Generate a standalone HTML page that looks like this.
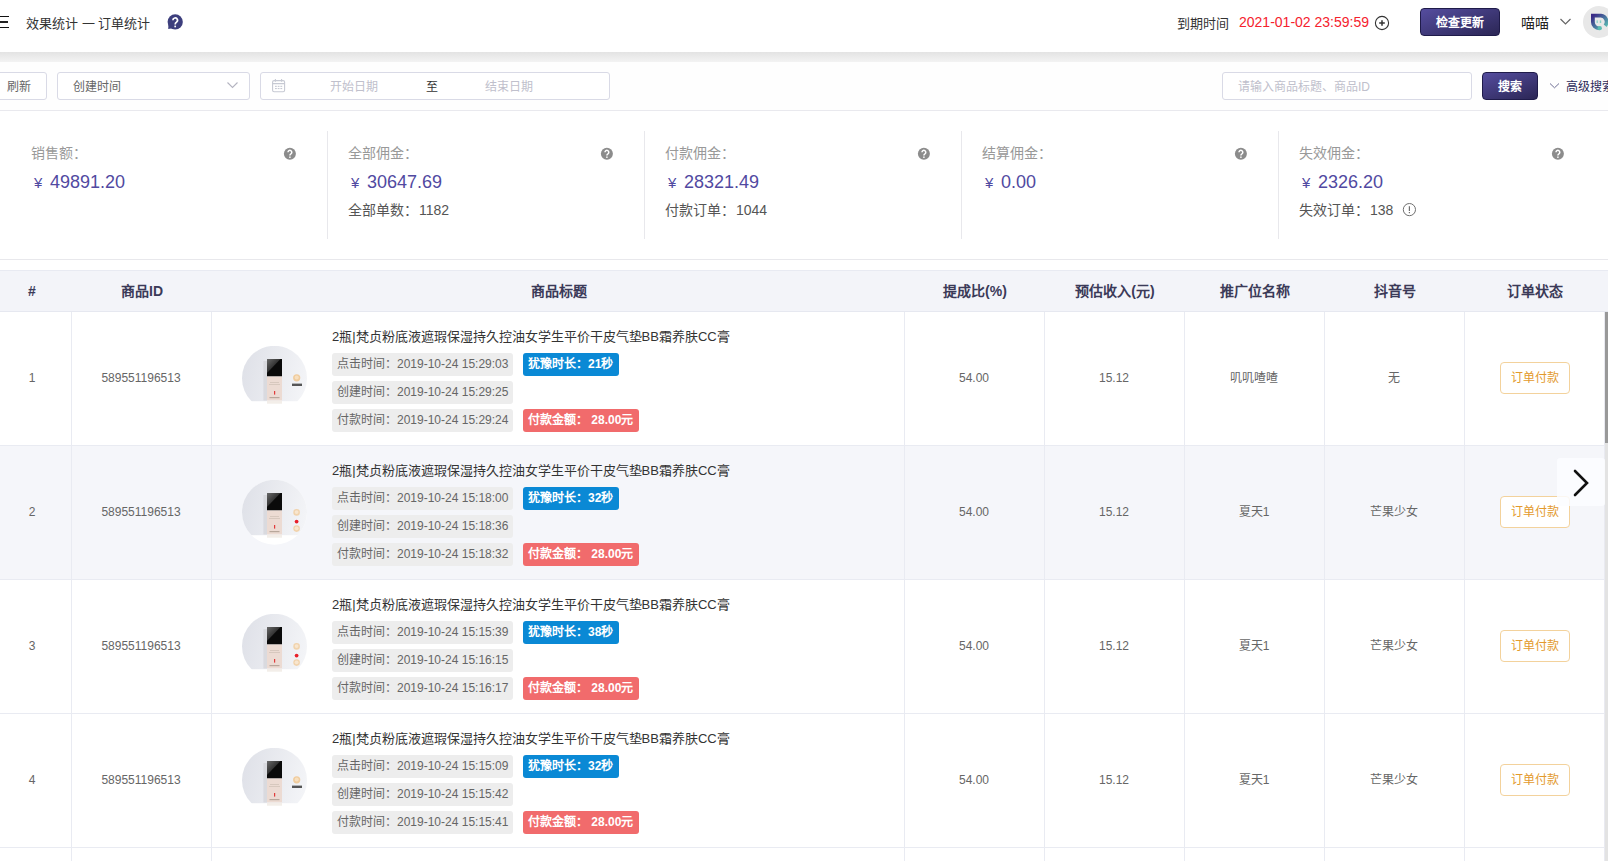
<!DOCTYPE html>
<html lang="zh-CN">
<head>
<meta charset="utf-8">
<style>
*{box-sizing:border-box;margin:0;padding:0}
html,body{width:1608px;height:861px;overflow:hidden;background:#fff}
body{position:relative;font-family:"Liberation Sans",sans-serif;font-size:13px;color:#333}
.a{position:absolute;white-space:nowrap}
.t13{font-size:13px;line-height:16px}
.t12{font-size:12px;line-height:15px}
/* header */
#hdr{position:absolute;left:0;top:0;width:1608px;height:52px;background:#fff}
#band{position:absolute;left:0;top:52px;width:1608px;height:10px;background:linear-gradient(#e3e3e3,#f3f3f3)}
#filter{position:absolute;left:0;top:62px;width:1608px;height:49px;background:#fefefe;border-bottom:1px solid #e9e9ee}
.box{position:absolute;border:1px solid #d9dae6;border-radius:3px;background:#fff}
.btnp{position:absolute;border-radius:4px;border:1px solid #1f1b4a;background:linear-gradient(160deg,#554d9f,#2b2655);color:#fff;font-weight:bold;text-align:center}
#stats{position:absolute;left:0;top:111px;width:1608px;height:149px;background:#fff;border-bottom:1px solid #e8e8ec}
.sep{position:absolute;top:131px;width:1px;height:108px;background:#e8e8ec}
.slab{color:#999;font-size:14px;line-height:17px}
.sval{color:#5149a1;font-size:18px;line-height:20px}
.ssub{color:#555;font-size:14px;line-height:17px}
.qi{position:absolute;width:12px;height:12px;border-radius:50%;background:#8a8a8a;color:#fff;font-size:10px;line-height:12px;text-align:center;font-weight:bold}
/* table */
#thead{position:absolute;left:0;top:270px;width:1608px;height:42px;background:#f3f4f9;border-top:1px solid #e8eaf2;border-bottom:1px solid #e6e8f0}
.th{position:absolute;top:283px;font-size:14px;line-height:17px;font-weight:bold;color:#3b3a58;text-align:center}
.row{position:absolute;left:0;width:1604px;height:134px;border-bottom:1px solid #e9ebf2}
.vl{position:absolute;width:1px;background:#e9ebf2}
.cell{position:absolute;font-size:12px;line-height:15px;color:#666;text-align:center}
.tag{position:absolute;white-space:nowrap;height:23px;border-radius:3px;font-size:12px;line-height:23px;padding:0 5px}
.tg{background:#ededed;color:#666}
.tb{background:#0a89d5;color:#fff;font-weight:bold}
.tr{background:#f16b6c;color:#fff;font-weight:bold}
.obtn{position:absolute;width:70px;height:32px;border:1px solid #f3d29c;border-radius:4px;color:#e39a2c;font-size:12px;line-height:31px;text-align:center;background:#fff}
</style>
</head>
<body>
<div id="hdr"></div><div id="band"></div><div id="filter"></div><div id="stats"></div>
<div class="a" style="left:0;top:15.6px;width:8.6px;height:1.6px;background:#111"></div>
<div class="a" style="left:0;top:21.2px;width:8.2px;height:1.6px;background:#222"></div>
<div class="a" style="left:0;top:26.6px;width:8.6px;height:1.6px;background:#111"></div>
<div class="a t13" style="left:26px;top:16px;color:#333">效果统计 一 订单统计</div>
<svg class="a" style="left:166px;top:13px" width="18" height="18" viewBox="0 0 18 18"><circle cx="9.2" cy="8.9" r="7.6" fill="#3d3f7d"/><path d="M2.5 11.5 L2.2 16 L6.8 15.2 Z" fill="#3d3f7d"/><path d="M6.9 7.3 A2.3 2.3 0 1 1 10.4 9.2 C9.5 9.7 9.2 10.2 9.2 11.4" fill="none" stroke="#fff" stroke-width="1.7"/><rect x="8.35" y="12.6" width="1.7" height="1.7" fill="#fff"/></svg>
<div class="a t13" style="left:1177px;top:16px;color:#333">到期时间</div>
<div class="a" style="left:1239px;top:14px;font-size:14px;line-height:17px;color:#f5222d">2021-01-02 23:59:59</div>
<svg class="a" style="left:1374px;top:15px" width="16" height="16" viewBox="0 0 16 16"><circle cx="8" cy="8" r="6.6" fill="none" stroke="#333" stroke-width="1.1"/><path d="M5.2 8 H10.8 M8 5.2 V10.8" stroke="#333" stroke-width="1.5"/></svg>
<div class="btnp" style="left:1420px;top:8px;width:80px;height:28px;line-height:28px;font-size:12px">检查更新</div>
<div class="a" style="left:1521px;top:15px;color:#222;font-size:14px;line-height:17px">喵喵</div>
<svg class="a" style="left:1559px;top:17px" width="13" height="9" viewBox="0 0 13 9"><path d="M1.5 2 L6.5 7 L11.5 2" fill="none" stroke="#666" stroke-width="1.2"/></svg>
<div class="a" style="left:1583px;top:6px;width:32px;height:32px;border-radius:50%;background:#e8e8e8"></div>
<svg class="a" style="left:1590px;top:13px" width="18" height="18" viewBox="0 0 18 18"><defs><linearGradient id="lg" x1="0" y1="0" x2="1" y2="1"><stop offset="0" stop-color="#3a2a86"/><stop offset="0.55" stop-color="#4a7aa0"/><stop offset="1" stop-color="#60c8b6"/></linearGradient></defs>
<path d="M15.2 12.8 A6.2 6.2 0 0 0 11 2.7 H2.9 V9 A6.4 6.4 0 0 0 9.3 15.4" fill="none" stroke="url(#lg)" stroke-width="3.8"/>
<circle cx="9.8" cy="15.2" r="2.1" fill="#5bbdb2"/>
<rect x="6.6" y="7.4" width="1.2" height="2.6" fill="#86d3c6"/><rect x="9.8" y="7.4" width="1.4" height="2.6" fill="#86d3c6"/></svg>
<div class="box" style="left:-10px;top:72px;width:57px;height:28px"></div>
<div class="a t12" style="left:7px;top:80px;color:#666">刷新</div>
<div class="box" style="left:57px;top:72px;width:193px;height:28px"></div>
<div class="a t12" style="left:73px;top:80px;color:#666">创建时间</div>
<svg class="a" style="left:226px;top:80px" width="13" height="10" viewBox="0 0 13 10"><path d="M1.5 2.5 L6.5 7.5 L11.5 2.5" fill="none" stroke="#b4b4c0" stroke-width="1.1"/></svg>
<div class="box" style="left:260px;top:72px;width:350px;height:28px"></div>
<svg class="a" style="left:271px;top:78px" width="15" height="15" viewBox="0 0 15 15"><g fill="none" stroke="#c6c9d3" stroke-width="1.1"><rect x="1.6" y="2.6" width="12" height="11.2" rx="1.5"/><path d="M1.6 5.6 H13.6 M4.4 0.9 V3.8 M10.6 0.9 V3.8"/></g>
<g fill="#c6c9d3"><rect x="4" y="7.8" width="1.8" height="1.1"/><rect x="6.7" y="7.8" width="1.8" height="1.1"/><rect x="9.4" y="7.8" width="1.8" height="1.1"/><rect x="4" y="10" width="1.8" height="1.1"/><rect x="6.7" y="10" width="1.8" height="1.1"/><rect x="9.4" y="10" width="1.8" height="1.1"/></g></svg>
<div class="a t12" style="left:330px;top:80px;color:#c0c0cc">开始日期</div>
<div class="a t12" style="left:426px;top:80px;color:#333">至</div>
<div class="a t12" style="left:485px;top:80px;color:#c0c0cc">结束日期</div>
<div class="box" style="left:1222px;top:72px;width:250px;height:28px"></div>
<div class="a t12" style="left:1238px;top:80px;color:#c0c0cc">请输入商品标题、商品ID</div>
<div class="btnp" style="left:1482px;top:72px;width:56px;height:28px;line-height:28px;font-size:12px">搜索</div>
<svg class="a" style="left:1549px;top:82px" width="11" height="8" viewBox="0 0 11 8"><path d="M1 1.5 L5.5 5.8 L10 1.5" fill="none" stroke="#6f6f95" stroke-width="1"/></svg>
<div class="a t12" style="left:1566px;top:80px;color:#2d2b5b">高级搜索</div>
<div class="a slab" style="left:31px;top:145px">销售额：</div>
<svg class="a" style="left:283px;top:147px" width="14" height="14" viewBox="0 0 14 14"><circle cx="6.9" cy="6.75" r="6" fill="#8c8c8c"/><path d="M5.0 5.3 A1.9 1.9 0 1 1 7.9 6.9 C7.1 7.3 6.9 7.7 6.9 8.6" fill="none" stroke="#fff" stroke-width="1.5"/><rect x="6.15" y="9.5" width="1.5" height="1.4" fill="#fff"/></svg>
<div class="a sval" style="left:34px;top:173px;font-size:15px">¥</div>
<div class="a sval" style="left:50px;top:172px">49891.20</div>
<div class="sep" style="left:327px"></div>
<div class="a slab" style="left:348px;top:145px">全部佣金：</div>
<svg class="a" style="left:600px;top:147px" width="14" height="14" viewBox="0 0 14 14"><circle cx="6.9" cy="6.75" r="6" fill="#8c8c8c"/><path d="M5.0 5.3 A1.9 1.9 0 1 1 7.9 6.9 C7.1 7.3 6.9 7.7 6.9 8.6" fill="none" stroke="#fff" stroke-width="1.5"/><rect x="6.15" y="9.5" width="1.5" height="1.4" fill="#fff"/></svg>
<div class="a sval" style="left:351px;top:173px;font-size:15px">¥</div>
<div class="a sval" style="left:367px;top:172px">30647.69</div>
<div class="a ssub" style="left:348px;top:202px">全部单数：<span style="margin-left:1px">1182</span></div>
<div class="sep" style="left:644px"></div>
<div class="a slab" style="left:665px;top:145px">付款佣金：</div>
<svg class="a" style="left:917px;top:147px" width="14" height="14" viewBox="0 0 14 14"><circle cx="6.9" cy="6.75" r="6" fill="#8c8c8c"/><path d="M5.0 5.3 A1.9 1.9 0 1 1 7.9 6.9 C7.1 7.3 6.9 7.7 6.9 8.6" fill="none" stroke="#fff" stroke-width="1.5"/><rect x="6.15" y="9.5" width="1.5" height="1.4" fill="#fff"/></svg>
<div class="a sval" style="left:668px;top:173px;font-size:15px">¥</div>
<div class="a sval" style="left:684px;top:172px">28321.49</div>
<div class="a ssub" style="left:665px;top:202px">付款订单：<span style="margin-left:1px">1044</span></div>
<div class="sep" style="left:961px"></div>
<div class="a slab" style="left:982px;top:145px">结算佣金：</div>
<svg class="a" style="left:1234px;top:147px" width="14" height="14" viewBox="0 0 14 14"><circle cx="6.9" cy="6.75" r="6" fill="#8c8c8c"/><path d="M5.0 5.3 A1.9 1.9 0 1 1 7.9 6.9 C7.1 7.3 6.9 7.7 6.9 8.6" fill="none" stroke="#fff" stroke-width="1.5"/><rect x="6.15" y="9.5" width="1.5" height="1.4" fill="#fff"/></svg>
<div class="a sval" style="left:985px;top:173px;font-size:15px">¥</div>
<div class="a sval" style="left:1001px;top:172px">0.00</div>
<div class="sep" style="left:1278px"></div>
<div class="a slab" style="left:1299px;top:145px">失效佣金：</div>
<svg class="a" style="left:1551px;top:147px" width="14" height="14" viewBox="0 0 14 14"><circle cx="6.9" cy="6.75" r="6" fill="#8c8c8c"/><path d="M5.0 5.3 A1.9 1.9 0 1 1 7.9 6.9 C7.1 7.3 6.9 7.7 6.9 8.6" fill="none" stroke="#fff" stroke-width="1.5"/><rect x="6.15" y="9.5" width="1.5" height="1.4" fill="#fff"/></svg>
<div class="a sval" style="left:1302px;top:173px;font-size:15px">¥</div>
<div class="a sval" style="left:1318px;top:172px">2326.20</div>
<div class="a ssub" style="left:1299px;top:202px">失效订单：<span style="margin-left:1px">138</span></div>
<svg class="a" style="left:1402px;top:202px" width="15" height="15" viewBox="0 0 15 15"><circle cx="7.4" cy="7.6" r="6.1" fill="none" stroke="#707070" stroke-width="1"/><path d="M7.4 4.3 V8.9" stroke="#707070" stroke-width="1.2"/><rect x="6.8" y="10" width="1.2" height="1.2" fill="#707070"/></svg>
<div id="thead"></div>
<div class="th" style="left:-7px;width:78px">#</div>
<div class="th" style="left:72px;width:140px">商品ID</div>
<div class="th" style="left:212px;width:693px">商品标题</div>
<div class="th" style="left:905px;width:140px">提成比(%)</div>
<div class="th" style="left:1045px;width:140px">预估收入(元)</div>
<div class="th" style="left:1185px;width:140px">推广位名称</div>
<div class="th" style="left:1325px;width:140px">抖音号</div>
<div class="th" style="left:1465px;width:140px">订单状态</div>
<div class="row" style="top:312px;background:#fff"></div>
<div class="vl" style="left:71px;top:312px;height:134px"></div>
<div class="vl" style="left:211px;top:312px;height:134px"></div>
<div class="vl" style="left:904px;top:312px;height:134px"></div>
<div class="vl" style="left:1044px;top:312px;height:134px"></div>
<div class="vl" style="left:1184px;top:312px;height:134px"></div>
<div class="vl" style="left:1324px;top:312px;height:134px"></div>
<div class="vl" style="left:1464px;top:312px;height:134px"></div>
<div class="cell" style="left:-7px;width:78px;top:371px">1</div>
<div class="cell" style="left:71px;width:140px;top:371px">589551196513</div>
<svg class="a" style="left:242px;top:346px" width="66" height="66" viewBox="0 0 66 66">
<defs><linearGradient id="cg346" x1="0" y1="0.3" x2="1" y2="0.5"><stop offset="0" stop-color="#dfe1e8"/><stop offset="1" stop-color="#f3f4f7"/></linearGradient>
<linearGradient id="cap346" x1="0" y1="0" x2="0.7" y2="0.7"><stop offset="0" stop-color="#6a6a6a"/><stop offset="1" stop-color="#1c1c1c"/></linearGradient>
<clipPath id="cp346"><circle cx="32.5" cy="32.3" r="32.5"/></clipPath></defs>
<g clip-path="url(#cp346)">
<rect x="0" y="0" width="66" height="66" fill="#fff"/>
<rect x="0" y="0" width="66" height="55.2" fill="url(#cg346)"/>
<path d="M11 6.5 L14 4.5" stroke="#444" stroke-width="1" opacity="0.7"/>
<rect x="21.4" y="15" width="3.6" height="39.5" fill="#d9dadf"/>
<rect x="25" y="13" width="15" height="17.5" fill="#0a0a0a"/><path d="M25 13 H38.5 L25 27 Z" fill="url(#cap346)"/>
<rect x="25" y="30.5" width="15" height="24" fill="#ecdbd3"/>
<rect x="25" y="54.5" width="15" height="3.2" fill="#f3eee9"/>
<rect x="28" y="36" width="9" height="0.8" fill="#d3c3b9"/>
<rect x="27" y="38" width="11" height="0.8" fill="#d3c3b9"/>
<rect x="32" y="45" width="1.2" height="3.6" fill="#e23a3a"/>
<rect x="27.5" y="51" width="10" height="1.2" fill="#b8a79b"/>
<circle cx="54.7" cy="31.8" r="3.6" fill="#f0cc9e"/><circle cx="54.7" cy="31.5" r="2" fill="#f7dfbf"/><rect x="50" y="37.6" width="10" height="2.4" fill="#3a3a3a" opacity="0.85"/></g>
</svg>
<div class="a t13" style="left:332px;top:329px;color:#333">2瓶|梵贞粉底液遮瑕保湿持久控油女学生平价干皮气垫BB霜养肤CC膏</div>
<div class="tag tg" style="left:332px;top:353px;width:181px">点击时间：2019-10-24 15:29:03</div>
<div class="tag tb" style="left:523px;top:353px;width:96px">犹豫时长：21秒</div>
<div class="tag tg" style="left:332px;top:381px;width:181px">创建时间：2019-10-24 15:29:25</div>
<div class="tag tg" style="left:332px;top:409px;width:181px">付款时间：2019-10-24 15:29:24</div>
<div class="tag tr" style="left:523px;top:409px;width:116px">付款金额： 28.00元</div>
<div class="cell" style="left:904px;width:140px;top:371px">54.00</div>
<div class="cell" style="left:1044px;width:140px;top:371px">15.12</div>
<div class="cell" style="left:1184px;width:140px;top:371px">叽叽喳喳</div>
<div class="cell" style="left:1324px;width:140px;top:371px">无</div>
<div class="obtn" style="left:1500px;top:362px">订单付款</div>
<div class="row" style="top:446px;background:#f5f6fa"></div>
<div class="vl" style="left:71px;top:446px;height:134px"></div>
<div class="vl" style="left:211px;top:446px;height:134px"></div>
<div class="vl" style="left:904px;top:446px;height:134px"></div>
<div class="vl" style="left:1044px;top:446px;height:134px"></div>
<div class="vl" style="left:1184px;top:446px;height:134px"></div>
<div class="vl" style="left:1324px;top:446px;height:134px"></div>
<div class="vl" style="left:1464px;top:446px;height:134px"></div>
<div class="cell" style="left:-7px;width:78px;top:505px">2</div>
<div class="cell" style="left:71px;width:140px;top:505px">589551196513</div>
<svg class="a" style="left:242px;top:480px" width="66" height="66" viewBox="0 0 66 66">
<defs><linearGradient id="cg480" x1="0" y1="0.3" x2="1" y2="0.5"><stop offset="0" stop-color="#dfe1e8"/><stop offset="1" stop-color="#f3f4f7"/></linearGradient>
<linearGradient id="cap480" x1="0" y1="0" x2="0.7" y2="0.7"><stop offset="0" stop-color="#6a6a6a"/><stop offset="1" stop-color="#1c1c1c"/></linearGradient>
<clipPath id="cp480"><circle cx="32.5" cy="32.3" r="32.5"/></clipPath></defs>
<g clip-path="url(#cp480)">
<rect x="0" y="0" width="66" height="66" fill="#fff"/>
<rect x="0" y="0" width="66" height="55.2" fill="url(#cg480)"/>
<path d="M11 6.5 L14 4.5" stroke="#444" stroke-width="1" opacity="0.7"/>
<rect x="21.4" y="15" width="3.6" height="39.5" fill="#d9dadf"/>
<rect x="25" y="13" width="15" height="17.5" fill="#0a0a0a"/><path d="M25 13 H38.5 L25 27 Z" fill="url(#cap480)"/>
<rect x="25" y="30.5" width="15" height="24" fill="#ecdbd3"/>
<rect x="25" y="54.5" width="15" height="3.2" fill="#f3eee9"/>
<rect x="28" y="36" width="9" height="0.8" fill="#d3c3b9"/>
<rect x="27" y="38" width="11" height="0.8" fill="#d3c3b9"/>
<rect x="32" y="45" width="1.2" height="3.6" fill="#e23a3a"/>
<rect x="27.5" y="51" width="10" height="1.2" fill="#b8a79b"/>
<circle cx="54.6" cy="32.4" r="3.3" fill="#f1d3ad"/><circle cx="54.6" cy="32.1" r="1.9" fill="#f8e6cf"/><circle cx="54.6" cy="41.6" r="1.9" fill="#e8202a"/><circle cx="54.6" cy="48.6" r="3.3" fill="#f1d3ad"/><circle cx="54.6" cy="48.3" r="1.9" fill="#f8e6cf"/></g>
</svg>
<div class="a t13" style="left:332px;top:463px;color:#333">2瓶|梵贞粉底液遮瑕保湿持久控油女学生平价干皮气垫BB霜养肤CC膏</div>
<div class="tag tg" style="left:332px;top:487px;width:181px">点击时间：2019-10-24 15:18:00</div>
<div class="tag tb" style="left:523px;top:487px;width:96px">犹豫时长：32秒</div>
<div class="tag tg" style="left:332px;top:515px;width:181px">创建时间：2019-10-24 15:18:36</div>
<div class="tag tg" style="left:332px;top:543px;width:181px">付款时间：2019-10-24 15:18:32</div>
<div class="tag tr" style="left:523px;top:543px;width:116px">付款金额： 28.00元</div>
<div class="cell" style="left:904px;width:140px;top:505px">54.00</div>
<div class="cell" style="left:1044px;width:140px;top:505px">15.12</div>
<div class="cell" style="left:1184px;width:140px;top:505px">夏天1</div>
<div class="cell" style="left:1324px;width:140px;top:505px">芒果少女</div>
<div class="obtn" style="left:1500px;top:496px">订单付款</div>
<div class="row" style="top:580px;background:#fff"></div>
<div class="vl" style="left:71px;top:580px;height:134px"></div>
<div class="vl" style="left:211px;top:580px;height:134px"></div>
<div class="vl" style="left:904px;top:580px;height:134px"></div>
<div class="vl" style="left:1044px;top:580px;height:134px"></div>
<div class="vl" style="left:1184px;top:580px;height:134px"></div>
<div class="vl" style="left:1324px;top:580px;height:134px"></div>
<div class="vl" style="left:1464px;top:580px;height:134px"></div>
<div class="cell" style="left:-7px;width:78px;top:639px">3</div>
<div class="cell" style="left:71px;width:140px;top:639px">589551196513</div>
<svg class="a" style="left:242px;top:614px" width="66" height="66" viewBox="0 0 66 66">
<defs><linearGradient id="cg614" x1="0" y1="0.3" x2="1" y2="0.5"><stop offset="0" stop-color="#dfe1e8"/><stop offset="1" stop-color="#f3f4f7"/></linearGradient>
<linearGradient id="cap614" x1="0" y1="0" x2="0.7" y2="0.7"><stop offset="0" stop-color="#6a6a6a"/><stop offset="1" stop-color="#1c1c1c"/></linearGradient>
<clipPath id="cp614"><circle cx="32.5" cy="32.3" r="32.5"/></clipPath></defs>
<g clip-path="url(#cp614)">
<rect x="0" y="0" width="66" height="66" fill="#fff"/>
<rect x="0" y="0" width="66" height="55.2" fill="url(#cg614)"/>
<path d="M11 6.5 L14 4.5" stroke="#444" stroke-width="1" opacity="0.7"/>
<rect x="21.4" y="15" width="3.6" height="39.5" fill="#d9dadf"/>
<rect x="25" y="13" width="15" height="17.5" fill="#0a0a0a"/><path d="M25 13 H38.5 L25 27 Z" fill="url(#cap614)"/>
<rect x="25" y="30.5" width="15" height="24" fill="#ecdbd3"/>
<rect x="25" y="54.5" width="15" height="3.2" fill="#f3eee9"/>
<rect x="28" y="36" width="9" height="0.8" fill="#d3c3b9"/>
<rect x="27" y="38" width="11" height="0.8" fill="#d3c3b9"/>
<rect x="32" y="45" width="1.2" height="3.6" fill="#e23a3a"/>
<rect x="27.5" y="51" width="10" height="1.2" fill="#b8a79b"/>
<circle cx="54.6" cy="32.4" r="3.3" fill="#f1d3ad"/><circle cx="54.6" cy="32.1" r="1.9" fill="#f8e6cf"/><circle cx="54.6" cy="41.6" r="1.9" fill="#e8202a"/><circle cx="54.6" cy="48.6" r="3.3" fill="#f1d3ad"/><circle cx="54.6" cy="48.3" r="1.9" fill="#f8e6cf"/></g>
</svg>
<div class="a t13" style="left:332px;top:597px;color:#333">2瓶|梵贞粉底液遮瑕保湿持久控油女学生平价干皮气垫BB霜养肤CC膏</div>
<div class="tag tg" style="left:332px;top:621px;width:181px">点击时间：2019-10-24 15:15:39</div>
<div class="tag tb" style="left:523px;top:621px;width:96px">犹豫时长：38秒</div>
<div class="tag tg" style="left:332px;top:649px;width:181px">创建时间：2019-10-24 15:16:15</div>
<div class="tag tg" style="left:332px;top:677px;width:181px">付款时间：2019-10-24 15:16:17</div>
<div class="tag tr" style="left:523px;top:677px;width:116px">付款金额： 28.00元</div>
<div class="cell" style="left:904px;width:140px;top:639px">54.00</div>
<div class="cell" style="left:1044px;width:140px;top:639px">15.12</div>
<div class="cell" style="left:1184px;width:140px;top:639px">夏天1</div>
<div class="cell" style="left:1324px;width:140px;top:639px">芒果少女</div>
<div class="obtn" style="left:1500px;top:630px">订单付款</div>
<div class="row" style="top:714px;background:#fff"></div>
<div class="vl" style="left:71px;top:714px;height:134px"></div>
<div class="vl" style="left:211px;top:714px;height:134px"></div>
<div class="vl" style="left:904px;top:714px;height:134px"></div>
<div class="vl" style="left:1044px;top:714px;height:134px"></div>
<div class="vl" style="left:1184px;top:714px;height:134px"></div>
<div class="vl" style="left:1324px;top:714px;height:134px"></div>
<div class="vl" style="left:1464px;top:714px;height:134px"></div>
<div class="cell" style="left:-7px;width:78px;top:773px">4</div>
<div class="cell" style="left:71px;width:140px;top:773px">589551196513</div>
<svg class="a" style="left:242px;top:748px" width="66" height="66" viewBox="0 0 66 66">
<defs><linearGradient id="cg748" x1="0" y1="0.3" x2="1" y2="0.5"><stop offset="0" stop-color="#dfe1e8"/><stop offset="1" stop-color="#f3f4f7"/></linearGradient>
<linearGradient id="cap748" x1="0" y1="0" x2="0.7" y2="0.7"><stop offset="0" stop-color="#6a6a6a"/><stop offset="1" stop-color="#1c1c1c"/></linearGradient>
<clipPath id="cp748"><circle cx="32.5" cy="32.3" r="32.5"/></clipPath></defs>
<g clip-path="url(#cp748)">
<rect x="0" y="0" width="66" height="66" fill="#fff"/>
<rect x="0" y="0" width="66" height="55.2" fill="url(#cg748)"/>
<path d="M11 6.5 L14 4.5" stroke="#444" stroke-width="1" opacity="0.7"/>
<rect x="21.4" y="15" width="3.6" height="39.5" fill="#d9dadf"/>
<rect x="25" y="13" width="15" height="17.5" fill="#0a0a0a"/><path d="M25 13 H38.5 L25 27 Z" fill="url(#cap748)"/>
<rect x="25" y="30.5" width="15" height="24" fill="#ecdbd3"/>
<rect x="25" y="54.5" width="15" height="3.2" fill="#f3eee9"/>
<rect x="28" y="36" width="9" height="0.8" fill="#d3c3b9"/>
<rect x="27" y="38" width="11" height="0.8" fill="#d3c3b9"/>
<rect x="32" y="45" width="1.2" height="3.6" fill="#e23a3a"/>
<rect x="27.5" y="51" width="10" height="1.2" fill="#b8a79b"/>
<circle cx="54.7" cy="31.8" r="3.6" fill="#f0cc9e"/><circle cx="54.7" cy="31.5" r="2" fill="#f7dfbf"/><rect x="50" y="37.6" width="10" height="2.4" fill="#3a3a3a" opacity="0.85"/></g>
</svg>
<div class="a t13" style="left:332px;top:731px;color:#333">2瓶|梵贞粉底液遮瑕保湿持久控油女学生平价干皮气垫BB霜养肤CC膏</div>
<div class="tag tg" style="left:332px;top:755px;width:181px">点击时间：2019-10-24 15:15:09</div>
<div class="tag tb" style="left:523px;top:755px;width:96px">犹豫时长：32秒</div>
<div class="tag tg" style="left:332px;top:783px;width:181px">创建时间：2019-10-24 15:15:42</div>
<div class="tag tg" style="left:332px;top:811px;width:181px">付款时间：2019-10-24 15:15:41</div>
<div class="tag tr" style="left:523px;top:811px;width:116px">付款金额： 28.00元</div>
<div class="cell" style="left:904px;width:140px;top:773px">54.00</div>
<div class="cell" style="left:1044px;width:140px;top:773px">15.12</div>
<div class="cell" style="left:1184px;width:140px;top:773px">夏天1</div>
<div class="cell" style="left:1324px;width:140px;top:773px">芒果少女</div>
<div class="obtn" style="left:1500px;top:764px">订单付款</div>
<div class="row" style="top:848px;background:#fff"></div>
<div class="vl" style="left:71px;top:848px;height:134px"></div>
<div class="vl" style="left:211px;top:848px;height:134px"></div>
<div class="vl" style="left:904px;top:848px;height:134px"></div>
<div class="vl" style="left:1044px;top:848px;height:134px"></div>
<div class="vl" style="left:1184px;top:848px;height:134px"></div>
<div class="vl" style="left:1324px;top:848px;height:134px"></div>
<div class="vl" style="left:1464px;top:848px;height:134px"></div>
<div class="a" style="left:1604px;top:312px;width:1px;height:549px;background:#e9eaf1"></div>
<div class="a" style="left:1605px;top:312px;width:3px;height:549px;background:#e3e3e3"></div>
<div class="a" style="left:1605px;top:312px;width:3px;height:131px;background:#999"></div>
<div class="a" style="left:1557px;top:458px;width:48px;height:48px;border-radius:3px;background:rgba(252,253,255,0.85)"></div>
<svg class="a" style="left:1570px;top:466px" width="24" height="34" viewBox="0 0 24 34"><path d="M5 5 L17 17 L5 29" fill="none" stroke="#111" stroke-width="2.6" stroke-linecap="round" stroke-linejoin="miter"/></svg>
</body>
</html>
